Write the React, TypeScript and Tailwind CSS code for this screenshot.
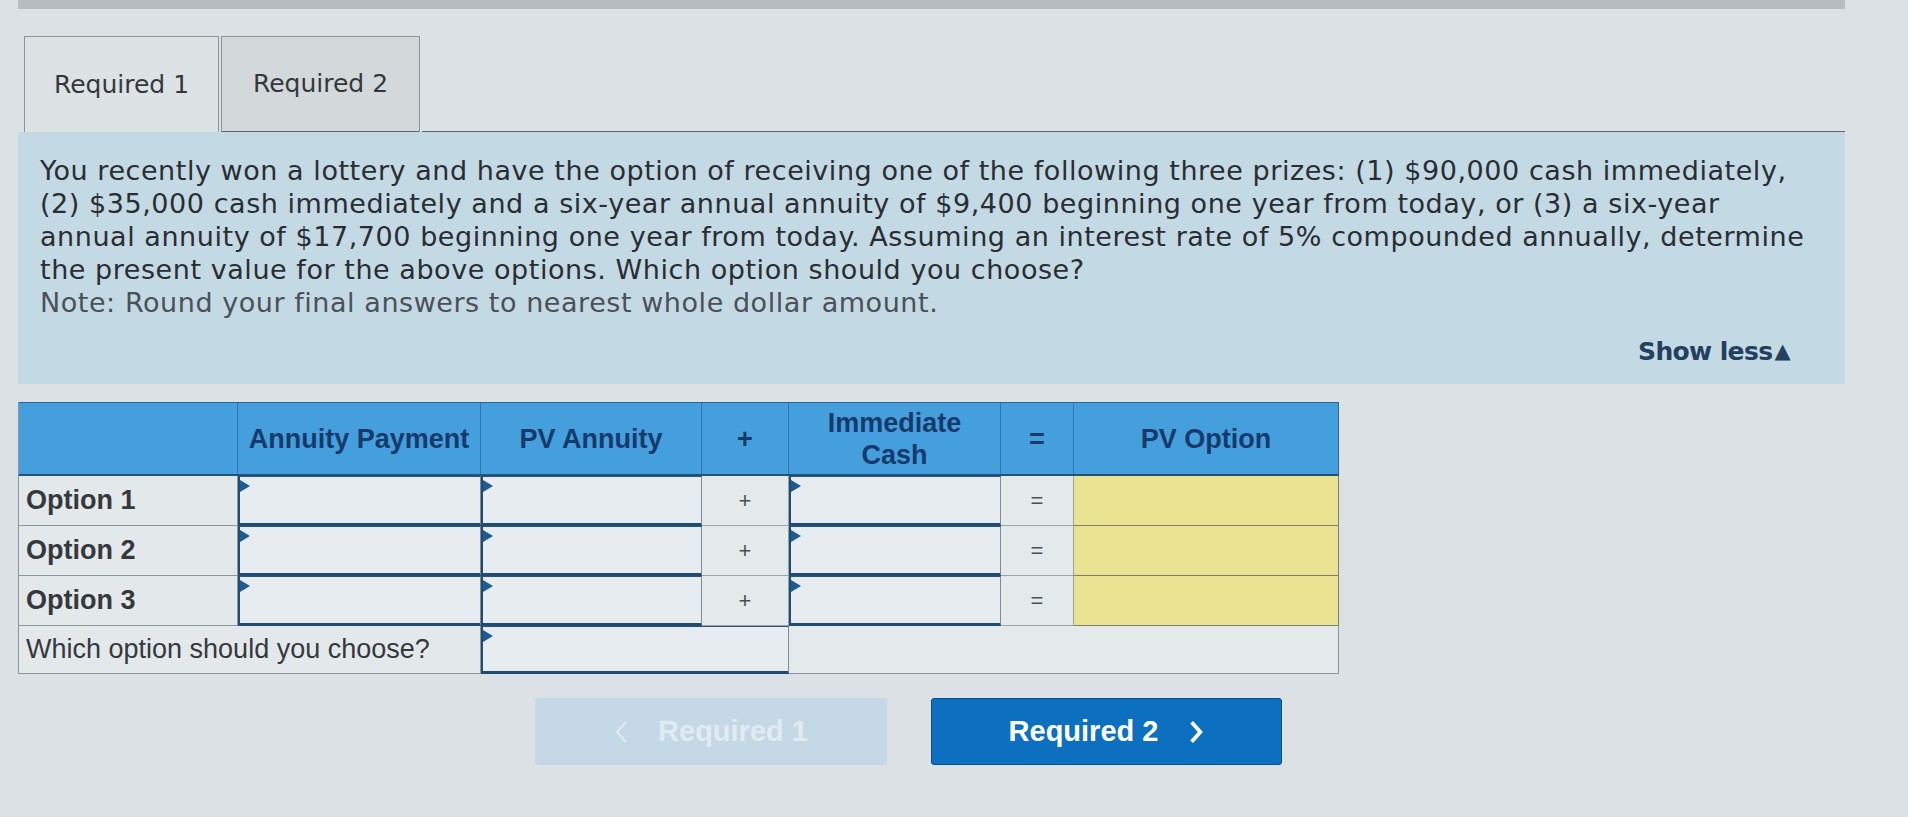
import React from 'react';

const Flag: React.FC = () => (
  <svg className="absolute left-0 top-[3px]" width="10" height="12" viewBox="0 0 10 12">
    <polygon points="0,0 10,6 0,12" fill="#1f5a93" />
  </svg>
);

const InputCell: React.FC<{ className?: string }> = ({ className = '' }) => (
  <div
    className={`relative bg-[#e6ecf0] border-l-2 border-t border-r border-b-[3px] border-l-[#1f4c72] border-t-[#2a5578] border-r-[#7d8c98] border-b-[#1f4c72] ${className}`}
  >
    <Flag />
  </div>
);

const LabelCell: React.FC<{ children: React.ReactNode; bold?: boolean; className?: string }> = ({
  children,
  bold,
  className = '',
}) => (
  <div
    className={`flex items-center pl-[7px] bg-[#e3e8eb] border-b border-r border-[#8b969d] text-[27px] text-[#36393c] ${bold ? 'font-bold' : ''} ${className}`}
  >
    {children}
  </div>
);

const OpCell: React.FC<{ sign: string }> = ({ sign }) => (
  <div className="flex items-center justify-center bg-[#e4e9ec] border-b border-r border-[#9aa4aa] text-[22px] text-[#4a4f53]">
    {sign}
  </div>
);

const YellowCell: React.FC = () => <div className="bg-[#e9e392] border-b border-r border-[#7e806a]" />;

const HeaderCell: React.FC<{ children?: React.ReactNode; last?: boolean }> = ({ children, last }) => (
  <div
    className={`flex items-center justify-center text-center leading-[32px] bg-[#459fdc] ${last ? '' : 'border-r border-[#2c78b4]'} text-[27px] font-bold text-[#153a6b]`}
  >
    {children}
  </div>
);

const OptionsTable: React.FC = () => {
  const rows = ['Option 1', 'Option 2', 'Option 3'];
  return (
    <div
      className="grid w-[1320px] grid-cols-[219px_243px_221px_87px_212px_73px_265px] grid-rows-[74px_50px_50px_50px_48px] border-l border-[#8b969d] font-['Liberation_Sans',Arial,sans-serif]"
    >
      <div className="col-span-7 row-start-1 col-start-1 grid grid-cols-subgrid border-t border-b-2 border-r border-t-[#2a6598] border-b-[#24527b] border-r-[#2a6598]">
        <HeaderCell />
        <HeaderCell>Annuity Payment</HeaderCell>
        <HeaderCell>PV Annuity</HeaderCell>
        <HeaderCell>+</HeaderCell>
        <HeaderCell>
          Immediate
          <br />
          Cash
        </HeaderCell>
        <HeaderCell>=</HeaderCell>
        <HeaderCell last>PV Option</HeaderCell>
      </div>
      {rows.map((r) => (
        <React.Fragment key={r}>
          <LabelCell bold>{r}</LabelCell>
          <InputCell />
          <InputCell />
          <OpCell sign="+" />
          <InputCell />
          <OpCell sign="=" />
          <YellowCell />
        </React.Fragment>
      ))}
      <LabelCell className="col-span-2">Which option should you choose?</LabelCell>
      <InputCell className="col-span-2" />
      <div className="col-span-3 bg-[#e4e9ec] border-b border-r border-[#8b969d]" />
    </div>
  );
};

export default function App() {
  return (
    <div className="w-[1908px] h-[817px] overflow-hidden bg-[#dbe1e5] font-['DejaVu_Sans',Verdana,sans-serif]">
      <div className="ml-[18px] w-[1827px]">
        <div className="h-[9px] bg-[#b8bcbf]" />

        {/* tabs */}
        <div className="flex items-end pt-[27px] pl-[6px] gap-[2px]">
          <div className="flex h-[96px] w-[195px] items-center justify-center border-l border-t border-r border-[#8d9498] bg-[#dde2e5] text-[25px] text-[#34383b]">
            Required 1
          </div>
          <div className="flex h-[96px] w-[199px] items-center justify-center border border-[#8d9498] border-b-[#5d666c] bg-[#d3d8db] text-[25px] text-[#34383b]">
            Required 2
          </div>
          <div className="flex-1 border-b border-[#5d666c]" />
        </div>

        {/* prompt */}
        <div className="bg-[#c3d9e4] pl-[22px] pr-[16px] pt-[22px] pb-[16px]">
          <p className="whitespace-nowrap text-[27px] leading-[33px] tracking-[0.55px] text-[#2a2e32]">
            You recently won a lottery and have the option of receiving one of the following three prizes: (1) $90,000 cash immediately,
            <br />
            (2) $35,000 cash immediately and a six-year annual annuity of $9,400 beginning one year from today, or (3) a six-year
            <br />
            annual annuity of $17,700 beginning one year from today. Assuming an interest rate of 5% compounded annually, determine
            <br />
            the present value for the above options. Which option should you choose?
          </p>
          <p className="whitespace-nowrap text-[27px] leading-[33px] tracking-[0.55px] text-[#4b5156]">
            Note: Round your final answers to nearest whole dollar amount.
          </p>
          <div className="mt-[16px] mr-[39px] flex justify-end">
            <span className="flex items-center gap-[2px] text-[25px] leading-[33px] font-bold tracking-tight text-[#23405f]">
              Show less
              <span className="text-[21px]">▲</span>
            </span>
          </div>
        </div>

        {/* table */}
        <div className="mt-[18px]">
          <OptionsTable />
        </div>

        {/* nav buttons */}
        <div className="mt-[24px] ml-[517px] flex gap-[44px] font-['Liberation_Sans',Arial,sans-serif]">
          <div className="flex h-[67px] w-[352px] items-center justify-center gap-[30px] rounded-[3px] bg-[#c5d8e6] text-[29px] font-bold text-[#e1ebf2]">
            <svg width="14" height="24" viewBox="0 0 14 24" fill="none" stroke="#e1ebf2" strokeWidth="2">
              <path d="M12 2 L3 12 L12 22" />
            </svg>
            Required 1
          </div>
          <div className="flex h-[67px] w-[351px] items-center justify-center gap-[30px] rounded-[3px] border border-[#0a4f8a] bg-[#0d6fc0] text-[29px] font-bold text-white">
            Required 2
            <svg width="16" height="26" viewBox="0 0 14 24" fill="none" stroke="#ffffff" strokeWidth="3.5">
              <path d="M3 3 L11 12 L3 21" />
            </svg>
          </div>
        </div>
      </div>
    </div>
  );
}
